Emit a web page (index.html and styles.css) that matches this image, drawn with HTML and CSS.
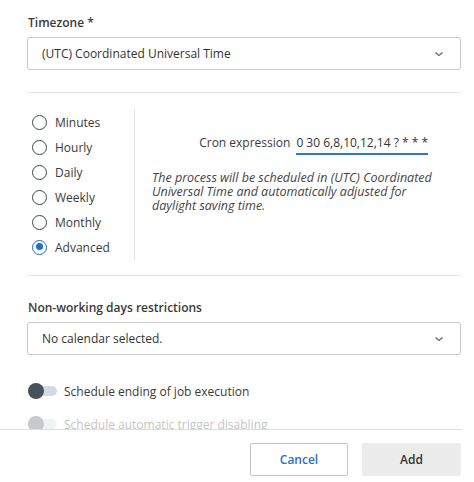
FILE: index.html
```html
<!DOCTYPE html>
<html>
<head>
<meta charset="utf-8">
<link rel="stylesheet" href="styles.css">
</head>
<body>
<div class="dialog">
  <div class="scroll">
    <div class="field">
      <div class="label">Timezone *</div>
      <div class="select">
        <span>(UTC) Coordinated Universal Time</span>
        <svg class="chev" width="10" height="6" viewBox="0 0 10 6"><path d="M1.5 1.5 L5 4.5 L8.5 1.5" fill="none" stroke="#666" stroke-width="1.3"/></svg>
      </div>
    </div>
    <div class="divider first"></div>
    <div class="schedule">
      <div class="radios">
        <div class="radio"><span class="circle"></span>Minutes</div>
        <div class="radio"><span class="circle"></span>Hourly</div>
        <div class="radio"><span class="circle"></span>Daily</div>
        <div class="radio"><span class="circle"></span>Weekly</div>
        <div class="radio"><span class="circle"></span>Monthly</div>
        <div class="radio"><span class="circle checked"></span>Advanced</div>
      </div>
      <div class="details">
        <div class="cron">
          <span class="cron-label">Cron expression</span>
          <span class="cron-value">0 30 6,8,10,12,14 ? * * *</span>
        </div>
        <p class="note">The process will be scheduled in (UTC) Coordinated Universal Time and automatically adjusted for daylight saving time.</p>
      </div>
    </div>
    <div class="divider second"></div>
    <div class="field">
      <div class="label">Non-working days restrictions</div>
      <div class="select">
        <span>No calendar selected.</span>
        <svg class="chev" width="10" height="6" viewBox="0 0 10 6"><path d="M1.5 1.5 L5 4.5 L8.5 1.5" fill="none" stroke="#666" stroke-width="1.3"/></svg>
      </div>
    </div>
    <div class="toggles">
      <div class="toggle"><span class="track"><span class="knob"></span></span>Schedule ending of job execution</div>
      <div class="toggle faded"><span class="track"><span class="knob"></span></span>Schedule automatic trigger disabling</div>
    </div>
  </div>
  <div class="footer">
    <button class="btn cancel">Cancel</button>
    <button class="btn add">Add</button>
  </div>
</div>
</body>
</html>
```
FILE: styles.css
```css
html, body {
  margin: 0;
  padding: 0;
  background: #fff;
}
body {
  font-family: "Open Sans", "Noto Sans", sans-serif;
  font-size: 12px;
  color: #3a3a3a;
}
.dialog {
  width: 474px;
  height: 482px;
  display: flex;
  flex-direction: column;
}
.scroll {
  height: 429px;
  overflow: hidden;
  padding: 14px 13px 0 27px;
  box-sizing: border-box;
}
.label {
  font-weight: 600;
  font-size: 12px;
  color: #3a3a3a;
  line-height: 17px;
  padding-left: 1px;
}
.select {
  margin-top: 6px;
  height: 33px;
  border: 1px solid #c9c9c9;
  border-radius: 3px;
  box-sizing: border-box;
  display: flex;
  align-items: center;
  justify-content: space-between;
  padding: 0 16px 0 14px;
  font-size: 12px;
  color: #333;
}
.chev { display: block; }
.divider {
  height: 1px;
  background: #e3e3e3;
}
.divider.first { margin-top: 22px; }
.schedule {
  display: flex;
  height: 182px;
}
.radios {
  width: 108px;
  border-right: 1px solid #e3e3e3;
  margin: 16px 0 15px;
  padding-top: 5px;
  display: flex;
  flex-direction: column;
  gap: 9px;
  box-sizing: border-box;
}
.radio {
  display: flex;
  align-items: center;
  height: 16px;
  font-size: 12px;
  color: #3a3a3a;
}
.circle {
  width: 15px;
  height: 15px;
  border: 1.5px solid #3c4650;
  border-radius: 50%;
  box-sizing: border-box;
  margin: 0 8px 0 5px;
  position: relative;
}
.circle.checked {
  border-color: #1f6fd1;
}
.circle.checked::after {
  content: "";
  position: absolute;
  left: 2.5px;
  top: 2.5px;
  width: 7px;
  height: 7px;
  border-radius: 50%;
  background: #1f6fd1;
}
.details {
  flex: 1;
  padding: 41px 0 0 17px;
}
.cron {
  display: flex;
  justify-content: flex-end;
  align-items: baseline;
  gap: 6px;
  padding-right: 33px;
}
.cron-label { color: #3a3a3a; }
.cron-value {
  border-bottom: 2px solid #2a78d6;
  padding-bottom: 2px;
  color: #333;
}
.note {
  margin: 16px 0 0;
  font-style: italic;
  font-size: 12.5px;
  line-height: 14px;
  color: #444;
  width: 285px;
}
.divider.second { margin-bottom: 23px; }
.toggles {
  margin-top: 28px;
  display: flex;
  flex-direction: column;
  gap: 17px;
}
.toggle {
  display: flex;
  align-items: center;
  height: 16px;
  font-size: 12px;
  color: #3a3a3a;
}
.track {
  position: relative;
  width: 29px;
  height: 10px;
  border-radius: 5px;
  background: #d3dbe1;
  margin: 0 7px 0 1px;
}
.knob {
  position: absolute;
  left: 0;
  top: -3px;
  width: 16px;
  height: 16px;
  border-radius: 50%;
  background: #46525c;
}
.toggle.faded {
  opacity: 0.3;
}
.footer {
  flex: 1;
  border-top: 1px solid #dedede;
  margin-right: 12px;
  display: flex;
  justify-content: flex-end;
  align-items: flex-start;
  padding-top: 13px;
  gap: 14px;
}
.btn {
  font-family: "Open Sans", "Noto Sans", sans-serif;
  font-size: 12px;
  font-weight: 600;
  height: 33px;
  border-radius: 2px;
  box-sizing: border-box;
  cursor: pointer;
}
.cancel {
  width: 98px;
  background: #fff;
  border: 1px solid #c4c4c4;
  color: #2a6fc9;
}
.add {
  width: 99px;
  margin-right: 1px;
  background: #ececec;
  border: 1px solid #ececec;
  color: #333;
}
```
